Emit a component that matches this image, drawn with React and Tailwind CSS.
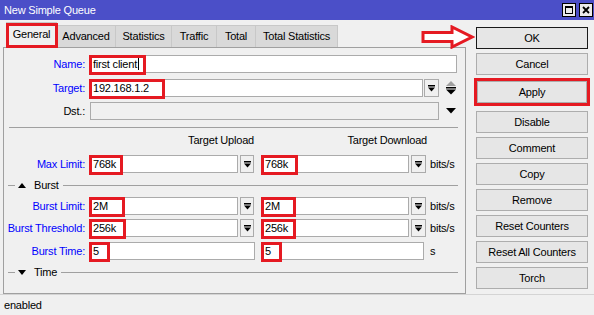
import React from "react";

function RedBox({ cls }) {
  return (
    <div
      className={`pointer-events-none absolute -left-[2px] -top-[1px] h-[20px] border-[3px] border-[#e51a22] ${cls}`}
    />
  );
}

function Input({ cls, value, box, disabled, cursor }) {
  return (
    <div
      className={`relative h-[18px] shrink-0 border border-[#ababab] ${
        disabled ? "bg-[#f0f0f0]" : "bg-white"
      } flex items-center pl-[2px] ${cls}`}
    >
      <span className="leading-none">{value}</span>
      {cursor && <span className="ml-[1px] h-[12px] w-px bg-black" />}
      {box && <RedBox cls={box} />}
    </div>
  );
}

function DropBtn({ cls }) {
  return (
    <div
      className={`flex h-[18px] shrink-0 items-center justify-center border border-[#ababab] bg-[#f0f0f0] ${cls}`}
    >
      <svg width="7" height="7" viewBox="0 0 7 7">
        <rect x="0" y="0" width="7" height="1.5" fill="#000" />
        <path d="M0 2.5 H7 L3.5 6.5 Z" fill="#000" />
      </svg>
    </div>
  );
}

function Label({ children, blue = true }) {
  return (
    <div
      className={`w-[82px] shrink-0 pr-[1px] text-right ${
        blue ? "text-[#0000ff]" : "text-black"
      }`}
    >
      {children}
    </div>
  );
}

function Section({ title, up }) {
  return (
    <div className="flex h-[13px] items-center">
      <div className="ml-[4px] h-px w-[7px] bg-[#a0a0a0]" />
      <svg className="ml-[3px]" width="8" height="5" viewBox="0 0 8 5">
        {up ? (
          <path d="M0 5 L4 0 L8 5 Z" fill="#000" />
        ) : (
          <path d="M0 0 L8 0 L4 5 Z" fill="#000" />
        )}
      </svg>
      <span className="ml-[8px]">{title}</span>
      <div className="ml-[4px] mr-[7px] h-px flex-1 bg-[#a0a0a0]" />
    </div>
  );
}

function Btn({ children, def }) {
  return (
    <div
      className={`flex h-[22px] w-[112px] shrink-0 items-center justify-center border ${
        def ? "border-[#1a1a1a]" : "border-[#adadad]"
      } bg-[#e6e6e6]`}
    >
      {children}
    </div>
  );
}

export default function App() {
  const tabs = [
    ["General", "w-[51px]"],
    ["Advanced", "w-[59px]"],
    ["Statistics", "w-[56px]"],
    ["Traffic", "w-[45px]"],
    ["Total", "w-[39px]"],
    ["Total Statistics", "w-[82px]"],
  ];
  return (
    <div className="relative flex h-[315px] w-[594px] flex-col overflow-hidden bg-[#f0f0f0] font-[family-name:'Liberation_Sans',Arial,sans-serif] text-[11px] tracking-[-0.2px] text-black">
      {/* title bar */}
      <div className="flex h-[20px] shrink-0 items-center justify-between bg-[#4b4fc8] pl-[4px] pr-[1px]">
        <span className="text-white">New Simple Queue</span>
        <div className="flex gap-[3px]">
          <div className="flex h-[14px] w-[14px] items-center justify-center border border-black bg-[#ececec]">
            <svg width="8" height="8" viewBox="0 0 8 8">
              <rect x="0.5" y="0.5" width="7" height="7" fill="none" stroke="#000" />
              <rect x="0" y="0" width="8" height="2" fill="#000" />
            </svg>
          </div>
          <div className="flex h-[14px] w-[14px] items-center justify-center border border-black bg-[#ececec]">
            <svg width="8" height="8" viewBox="0 0 8 8">
              <path d="M1 1 L7 7 M7 1 L1 7" stroke="#000" strokeWidth="1.8" />
            </svg>
          </div>
        </div>
      </div>

      {/* middle */}
      <div className="flex h-[274px] shrink-0">
        {/* left */}
        <div className="w-[470px] shrink-0 pl-[3px]">
          {/* tabs */}
          <div className="flex h-[27px] items-end pl-[3px]">
            {tabs.map(([t, w], i) =>
              i === 0 ? (
                <div
                  key={t}
                  className={`relative z-10 -mb-px flex h-[26px] ${w} items-center justify-center border-x border-t border-[#c8c8c8] bg-[#f0f0f0] pb-[2px]`}
                >
                  <span>{t}</span>
                  <div className="pointer-events-none absolute -left-[1px] top-0 h-[25px] w-[52px] border-[3px] border-[#e51a22]" />
                </div>
              ) : (
                <div
                  key={t}
                  className={`flex h-[22px] ${w} items-center justify-center border-r border-t border-[#c8c8c8] bg-[#d9d9d9]`}
                >
                  {t}
                </div>
              )
            )}
          </div>

          {/* panel */}
          <div className="h-[247px] w-[463px] border border-[#a0a0a0] pt-[7px]">
            <div className="flex h-[18px] items-center gap-[4px]">
              <Label>Name:</Label>
              <Input cls="w-[367px]" value="first client" cursor box="w-[57px]" />
            </div>
            <div className="mt-[6px] flex h-[18px] items-center">
              <Label>Target:</Label>
              <Input cls="ml-[4px] w-[333px]" value="192.168.1.2" box="w-[76px]" />
              <DropBtn cls="ml-[1px] w-[15px]" />
              <svg className="ml-[7px]" width="10" height="14" viewBox="0 0 10 14">
                <path d="M0 5 L5 0 L10 5 Z" fill="#a0a0a0" />
                <rect x="0" y="6" width="10" height="1.5" fill="#000" />
                <path d="M0 8.5 H10 L5 13.5 Z" fill="#000" />
              </svg>
            </div>
            <div className="mt-[5px] flex h-[18px] items-center">
              <Label blue={false}>Dst.:</Label>
              <Input cls="ml-[4px] w-[349px]" value="" disabled />
              <svg className="ml-[7px]" width="10" height="6" viewBox="0 0 10 6">
                <path d="M0 0 H10 L5 5.5 Z" fill="#000" />
              </svg>
            </div>

            <div className="ml-[5px] mr-[7px] mt-[7px] h-px bg-[#a0a0a0]" />

            <div className="mt-[6px] flex h-[13px] items-center">
              <div className="w-[86px] shrink-0" />
              <div className="w-[164px] shrink-0 text-right">Target Upload</div>
              <div className="ml-[8px] w-[165px] shrink-0 text-right">Target Download</div>
            </div>

            <div className="mt-[8px] flex h-[18px] items-center">
              <Label>Max Limit:</Label>
              <Input cls="ml-[4px] w-[148px]" value="768k" box="w-[34px]" />
              <DropBtn cls="ml-[2px] w-[14px]" />
              <Input cls="ml-[8px] w-[147px]" value="768k" box="w-[37px]" />
              <DropBtn cls="ml-[2px] w-[15px]" />
              <span className="ml-[4px]">bits/s</span>
            </div>

            <div className="mt-[6px]">
              <Section title="Burst" up />
            </div>

            <div className="mt-[5px] flex h-[18px] items-center">
              <Label>Burst Limit:</Label>
              <Input cls="ml-[4px] w-[148px]" value="2M" box="w-[36px]" />
              <DropBtn cls="ml-[2px] w-[14px]" />
              <Input cls="ml-[8px] w-[147px]" value="2M" box="w-[35px]" />
              <DropBtn cls="ml-[2px] w-[15px]" />
              <span className="ml-[4px]">bits/s</span>
            </div>
            <div className="mt-[4px] flex h-[18px] items-center">
              <Label>Burst Threshold:</Label>
              <Input cls="ml-[4px] w-[148px]" value="256k" box="w-[37px]" />
              <DropBtn cls="ml-[2px] w-[14px]" />
              <Input cls="ml-[8px] w-[147px]" value="256k" box="w-[35px]" />
              <DropBtn cls="ml-[2px] w-[15px]" />
              <span className="ml-[4px]">bits/s</span>
            </div>
            <div className="mt-[5px] flex h-[18px] items-center">
              <Label>Burst Time:</Label>
              <Input cls="ml-[4px] w-[165px]" value="5" box="w-[21px]" />
              <Input cls="ml-[7px] w-[162px]" value="5" box="w-[21px]" />
              <span className="ml-[6px]">s</span>
            </div>

            <div className="mt-[6px]">
              <Section title="Time" />
            </div>
          </div>
        </div>

        {/* right buttons */}
        <div className="flex flex-col pl-[6px] pt-[7px]">
          <Btn def>OK</Btn>
          <div className="mt-[4px]">
            <Btn>Cancel</Btn>
          </div>
          <div className="-ml-[2px] mt-[3px] w-[116px] border-[3px] border-[#e51a22]">
            <div className="flex h-[22px] w-[110px] items-center justify-center border border-[#adadad] bg-[#e6e6e6]">
              Apply
            </div>
          </div>
          <div className="mt-[5px] flex flex-col gap-[4px]">
            <Btn>Disable</Btn>
            <Btn>Comment</Btn>
            <Btn>Copy</Btn>
            <Btn>Remove</Btn>
            <Btn>Reset Counters</Btn>
            <Btn>Reset All Counters</Btn>
            <Btn>Torch</Btn>
          </div>
        </div>
      </div>

      {/* status bar */}
      <div className="flex h-[21px] shrink-0 items-center border-t border-[#d4d4d4] pl-[4px]">
        enabled
      </div>

      {/* red annotation arrow */}
      <svg
        className="pointer-events-none absolute left-[421px] top-[25px]"
        width="54"
        height="24"
        viewBox="0 0 54 24"
      >
        <path
          d="M2 7.5 H31 V2 L51 12 L31 22 V16.5 H2 Z"
          fill="#ffffff"
          stroke="#e51a22"
          strokeWidth="3"
          strokeLinejoin="miter"
        />
      </svg>
    </div>
  );
}
